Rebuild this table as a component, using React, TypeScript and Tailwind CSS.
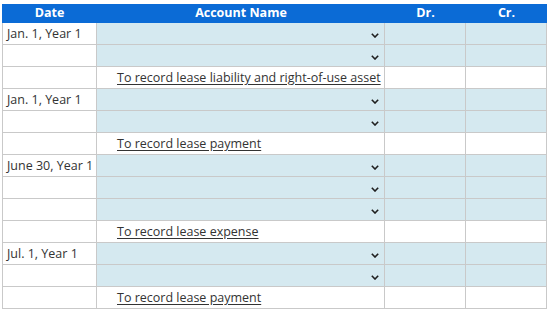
import React from 'react';

type Row = { date?: string; memo?: string };

const rows: Row[] = [
  { date: 'Jan. 1, Year 1' },
  {},
  { memo: 'To record lease liability and right-of-use asset' },
  { date: 'Jan. 1, Year 1' },
  {},
  { memo: 'To record lease payment' },
  { date: 'June 30, Year 1' },
  {},
  {},
  { memo: 'To record lease expense' },
  { date: 'Jul. 1, Year 1' },
  {},
  { memo: 'To record lease payment' },
];

const Chevron = () => (
  <svg width="8" height="5" viewBox="0 0 8 5" className="mt-[3px]">
    <path d="M0.8 0.8 L4 4 L7.2 0.8" fill="none" stroke="#1f1f1f" strokeWidth="1.6" />
  </svg>
);

export default function App() {
  return (
    <div className="bg-white w-[552px] h-[317px] pt-[4px] pl-[2px] font-['Open_Sans',sans-serif] text-[#333]">
      <div className="w-[545px]">
        {/* Header */}
        <div className="grid grid-cols-[95px_288px_81px_81px] h-[19px] bg-[#0b6bd6] text-white text-[12.5px] leading-none font-bold items-center text-center">
          <div>Date</div>
          <div>Account Name</div>
          <div>Dr.</div>
          <div>Cr.</div>
        </div>

        {/* Body */}
        <div className="border-l border-[#c9c9c9]">
          {rows.map((r, i) => {
            const isMemo = !!r.memo;
            const fill = isMemo ? 'bg-white' : 'bg-[#d5e9f0]';
            return (
              <div key={i} className="grid grid-cols-[94px_288px_81px_81px] h-[22px] text-[12.5px]">
                <div className="border-r border-b border-[#c9c9c9] bg-white flex items-center pl-[4px] pt-[1px] whitespace-nowrap">
                  {r.date}
                </div>
                <div className={`border-r border-b border-[#c9c9c9] ${fill} flex items-center pt-[1px]`}>
                  {isMemo ? (
                    <span className="pl-[20px] underline underline-offset-2 whitespace-nowrap">{r.memo}</span>
                  ) : (
                    <div className="ml-auto pr-[5px] flex items-center">
                      <Chevron />
                    </div>
                  )}
                </div>
                <div className={`border-r border-b border-[#c9c9c9] ${fill}`} />
                <div className={`border-r border-b border-[#c9c9c9] ${fill}`} />
              </div>
            );
          })}
        </div>
      </div>
    </div>
  );
}
